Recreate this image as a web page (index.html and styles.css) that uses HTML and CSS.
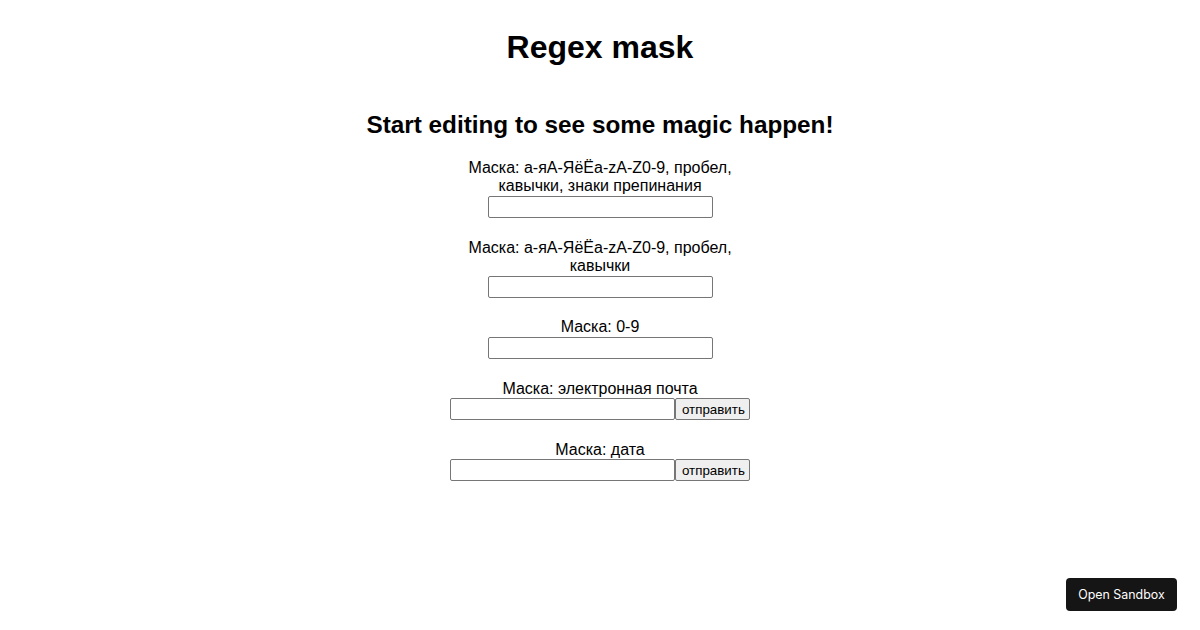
FILE: index.html
```html
<!DOCTYPE html>
<html lang="ru">
<head>
<meta charset="utf-8">
<title>Regex mask</title>
<link rel="stylesheet" href="styles.css">
</head>
<body>
<div class="app">
  <h1>Regex mask</h1>
  <h2>Start editing to see some magic happen!</h2>
  <div class="fields">
    <div class="field">
      <label class="label">Маска: а-яА-ЯёЁа-zA-Z0-9, пробел, кавычки, знаки препинания</label>
      <div class="row"><input class="input" type="text"></div>
    </div>
    <div class="field">
      <label class="label">Маска: а-яА-ЯёЁа-zA-Z0-9, пробел, кавычки</label>
      <div class="row"><input class="input" type="text"></div>
    </div>
    <div class="field">
      <label class="label">Маска: 0-9</label>
      <div class="row"><input class="input" type="text"></div>
    </div>
    <div class="field">
      <label class="label">Маска: электронная почта</label>
      <div class="row"><input class="input" type="text"><button class="btn" type="button">отправить</button></div>
    </div>
    <div class="field">
      <label class="label">Маска: дата</label>
      <div class="row"><input class="input" type="text"><button class="btn" type="button">отправить</button></div>
    </div>
  </div>
</div>
<a class="sandbox" href="#">Open Sandbox</a>
</body>
</html>
```
FILE: styles.css
```css
body {
  margin: 8px;
  background: #fff;
  color: #000;
}
.app {
  font-family: "Liberation Sans", Arial, sans-serif;
  text-align: center;
}
h1 {
  font-size: 32px;
  margin: 21.44px 0 44.5px;
}
h2 {
  font-size: 24.3px;
  margin: 19.92px 0;
}
.fields {
  width: 300px;
  margin: 0 auto;
}
.field {
  margin-bottom: 20.6px;
}
.label {
  display: block;
  font-size: 16px;
  line-height: 18.6px;
}
.row {
  display: flex;
  justify-content: center;
}
.input {
  width: 225px;
  height: 22px;
  box-sizing: border-box;
  margin: 0;
  padding: 1px 2px;
  border: 1px solid #767676;
  border-radius: 2px;
  font-family: "Liberation Sans", Arial, sans-serif;
  font-size: 13.33px;
}
.btn {
  width: 75px;
  height: 22px;
  box-sizing: border-box;
  margin: 0;
  padding: 1px 6px;
  border: 1px solid #767676;
  border-radius: 2px;
  background: #efefef;
  font-family: "Liberation Sans", Arial, sans-serif;
  font-size: 13.33px;
  color: #000;
}
.sandbox {
  position: fixed;
  right: 23px;
  bottom: 19px;
  width: 111px;
  height: 33px;
  box-sizing: border-box;
  display: flex;
  align-items: center;
  justify-content: center;
  background: #151515;
  color: #fff;
  border-radius: 4px;
  font-family: Inter, "Liberation Sans", sans-serif;
  font-size: 12.4px;
  text-decoration: none;
}
```
